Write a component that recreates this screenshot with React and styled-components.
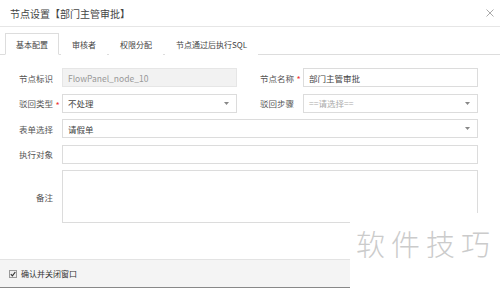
import React from 'react';
import styled, { createGlobalStyle } from 'styled-components';

const GlobalStyle = createGlobalStyle`
  html, body {
    margin: 0;
    padding: 0;
    background: #fff;
  }
  body {
    font-family: "Noto Sans CJK SC", "Noto Sans", sans-serif;
    color: #333;
  }
`;

const tabs = ['基本配置', '审核者', '权限分配', '节点通过后执行SQL'];

function Caret() {
  return (
    <svg width="5" height="3" viewBox="0 0 5 3">
      <path d="M0 0 L5 0 L2.5 3 Z" fill="#888" />
    </svg>
  );
}

function Field({ label, required, children }) {
  return (
    <>
      <Label>
        {label}
        <Star>{required ? '*' : ''}</Star>
      </Label>
      {children}
    </>
  );
}

function App() {
  return (
    <Dialog>
      <GlobalStyle />
      <Header>
        <Title>节点设置【部门主管审批】</Title>
        <Close>
          <svg width="8" height="8" viewBox="0 0 8 8">
            <path d="M0.5 0.5 L7.5 7.5 M7.5 0.5 L0.5 7.5" stroke="#aaa" strokeWidth="1" />
          </svg>
        </Close>
      </Header>

      <TabBar>
        {tabs.map((t, i) => (
          <Tab key={t} $active={i === 0}>{t}</Tab>
        ))}
      </TabBar>

      <Form>
        <Field label="节点标识">
          <Input $disabled>FlowPanel_node_10</Input>
        </Field>
        <Field label="节点名称" required>
          <Input>部门主管审批</Input>
        </Field>

        <Field label="驳回类型" required>
          <Select>
            <span>不处理</span>
            <Caret />
          </Select>
        </Field>
        <Field label="驳回步骤">
          <Select $placeholder>
            <span>==请选择==</span>
            <Caret />
          </Select>
        </Field>

        <Field label="表单选择">
          <Select $wide>
            <span>请假单</span>
            <Caret />
          </Select>
        </Field>

        <Field label="执行对象">
          <Input $wide />
        </Field>

        <Field label="备注">
          <TextArea />
        </Field>
      </Form>

      <Footer>
        <Check>
          <svg width="6" height="6" viewBox="0 0 6 6">
            <path d="M0.8 3.2 L2.4 4.8 L5.3 1" stroke="#333" strokeWidth="1.2" fill="none" />
          </svg>
        </Check>
        <FooterText>确认并关闭窗口</FooterText>
      </Footer>

      <Watermark>软件技巧</Watermark>
    </Dialog>
  );
}

const Dialog = styled.div`
  position: relative;
  width: 500px;
  height: 288px;
  display: flex;
  flex-direction: column;
  overflow: hidden;
  background: #fff;
`;

const Header = styled.div`
  height: 26px;
  border-bottom: 1px solid #e6e6e6;
  display: flex;
  align-items: center;
  justify-content: space-between;
  padding: 0 6px 0 10px;
`;

const Title = styled.div`
  font-size: 10px;
  color: #444;
`;

const Close = styled.div`
  display: flex;
  align-items: center;
`;

const TabBar = styled.div`
  display: flex;
  gap: 2px;
  padding: 6px 5px 0;
  border-bottom: 1px solid #ddd;
`;

const Tab = styled.div`
  height: 22px;
  box-sizing: border-box;
  padding: 0 10px;
  display: flex;
  align-items: center;
  font-size: 8px;
  color: #444;
  border: 1px solid ${(p) => (p.$active ? '#ddd' : 'transparent')};
  border-bottom-color: ${(p) => (p.$active ? '#fff' : 'transparent')};
  background: #fff;
  margin-bottom: -1px;
`;

const Form = styled.div`
  display: grid;
  grid-template-columns: 62px 175px 66px 175px;
  row-gap: 6.5px;
  padding-top: 13px;
`;

const Label = styled.div`
  display: flex;
  align-items: center;
  justify-content: flex-end;
  font-size: 8.5px;
  color: #555;
`;

const Star = styled.span`
  width: 9px;
  text-align: center;
  color: #e33;
  font-size: 9px;
  transform: translateY(2px);
`;

const boxBase = `
  box-sizing: border-box;
  height: 19px;
  border: 1px solid #dcdcdc;
  display: flex;
  align-items: center;
  padding: 0 5px;
  font-size: 8.5px;
`;

const Input = styled.div`
  ${boxBase}
  grid-column: ${(p) => (p.$wide ? '2 / span 3' : 'auto')};
  background: ${(p) => (p.$disabled ? '#f2f2f2' : '#fff')};
  color: ${(p) => (p.$disabled ? '#999' : '#444')};
  border-color: ${(p) => (p.$disabled ? '#e6e6e6' : '#dcdcdc')};
`;

const Select = styled.div`
  ${boxBase}
  grid-column: ${(p) => (p.$wide ? '2 / span 3' : 'auto')};
  justify-content: space-between;
  padding-right: 7px;
  color: ${(p) => (p.$placeholder ? '#aaa' : '#444')};
`;

const TextArea = styled.div`
  box-sizing: border-box;
  grid-column: 2 / span 3;
  height: 53px;
  border: 1px solid #dcdcdc;
`;

const Footer = styled.div`
  margin-top: auto;
  height: 27px;
  border-top: 1px solid #e3e3e3;
  border-bottom: 1px solid #888;
  background: #f4f4f4;
  display: flex;
  align-items: center;
  gap: 4px;
  padding-left: 9px;
`;

const Check = styled.div`
  box-sizing: border-box;
  width: 8px;
  height: 8px;
  border: 1px solid #999;
  background: #eee;
  display: flex;
  align-items: center;
  justify-content: center;
`;

const FooterText = styled.div`
  font-size: 8px;
  color: #333;
`;

const Watermark = styled.div`
  position: absolute;
  left: 350px;
  top: 213px;
  right: 0;
  bottom: 0;
  background: #fff;
  padding: 15px 0 0 6px;
  font-size: 29px;
  font-weight: 300;
  line-height: 30px;
  letter-spacing: 6px;
  color: #cbcbcb;
  white-space: nowrap;
`;

export default App;
